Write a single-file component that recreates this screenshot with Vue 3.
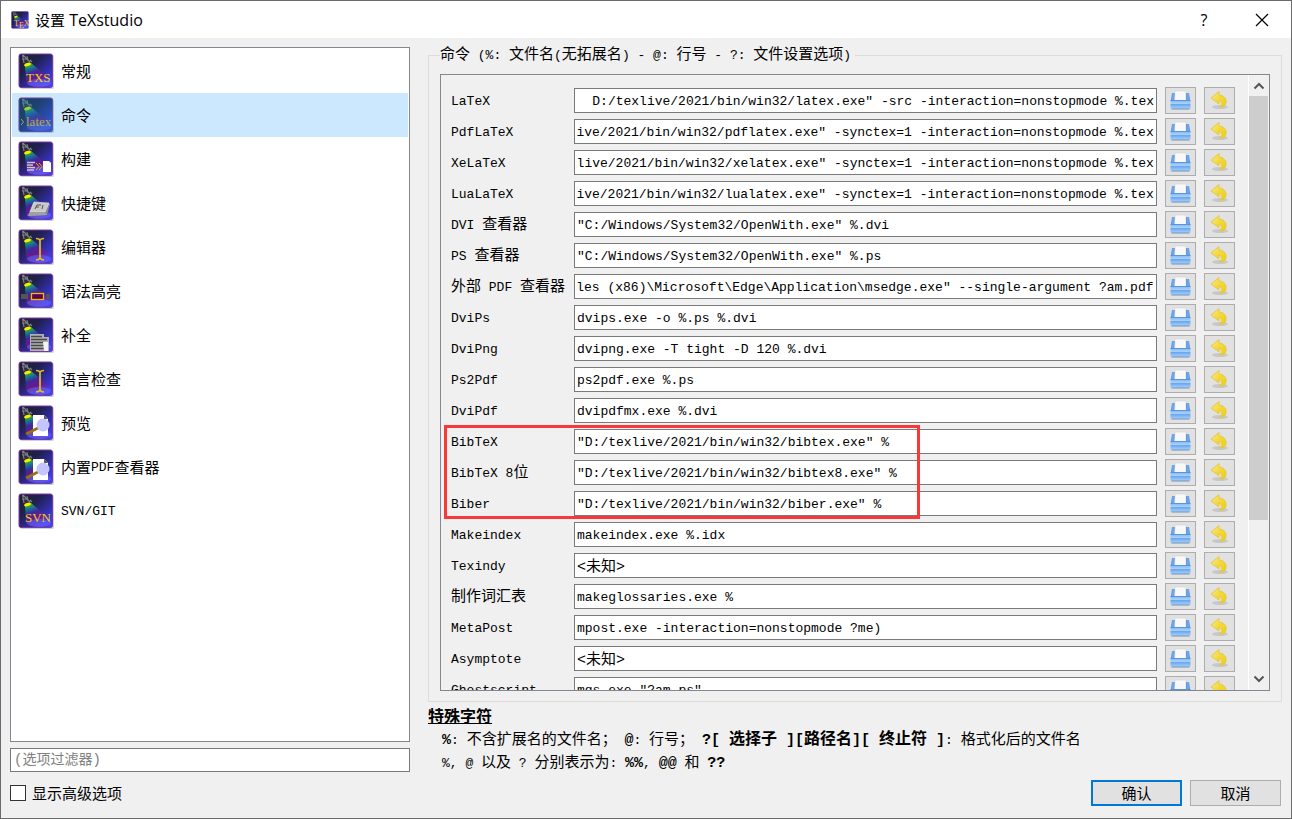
<!-- Settings dialog: category list on the left, command table on the right -->
<template>
  <div class="dialog">
    <!-- Shared icon parts -->
    <svg class="defs" width="0" height="0" aria-hidden="true">
      <defs>
        <linearGradient id="tile" x1="0" y1="0" x2="1" y2="1">
          <stop offset="0" stop-color="#20202c" />
          <stop offset="0.35" stop-color="#20204c" />
          <stop offset="0.7" stop-color="#3430b8" />
          <stop offset="1" stop-color="#4448ff" />
        </linearGradient>
        <linearGradient id="beam" gradientUnits="userSpaceOnUse" x1="9" y1="10" x2="18" y2="34">
          <stop offset="0" stop-color="#e8f000" />
          <stop offset="0.12" stop-color="#38b838" />
          <stop offset="0.26" stop-color="#1878a8" />
          <stop offset="0.42" stop-color="#4828a0" />
          <stop offset="0.66" stop-color="#701888" />
          <stop offset="1" stop-color="#5040e8" />
        </linearGradient>
        <linearGradient id="tray" x1="0" y1="0" x2="0" y2="1">
          <stop offset="0" stop-color="#7fb6f2" />
          <stop offset="0.4" stop-color="#a9d0fa" />
          <stop offset="0.5" stop-color="#6ba8ee" />
          <stop offset="1" stop-color="#a9d4ff" />
        </linearGradient>
        <linearGradient id="gold" x1="0" y1="0" x2="1" y2="1">
          <stop offset="0" stop-color="#fbe98a" />
          <stop offset="0.5" stop-color="#f3d83c" />
          <stop offset="1" stop-color="#efd000" />
        </linearGradient>
        <g id="spot">
          <rect x="2" y="2" width="34" height="34" rx="2" fill="#777" opacity="0.35" />
          <rect x="1" y="1" width="33.5" height="33.5" rx="2" fill="url(#tile)" stroke="#7838a8" />
          <path d="M7 13 L13 10 L32 26 C34 31 30 33.500 22 33.500 C13 33.500 8 31 8 27 Z" fill="url(#beam)" opacity="0.85" />
          <ellipse cx="21" cy="30" rx="12" ry="4" fill="#6870ff" opacity="0.45" />
          <path d="M4 7 L10 5 L13 10 L6 13 Z" fill="#303038" />
          <path d="M4.500 2 L6 10 M5 2 L12 9 M4 6 L9 6 M9 3 L10 8 M12 7 L14 9" stroke="#80808a" stroke-width="1.1" fill="none" />
          <ellipse cx="9.500" cy="11.500" rx="3.500" ry="1.700" fill="#f0f000" transform="rotate(-18 9.500 11.500)" />
        </g>
      </defs>
    </svg>

    <header class="titlebar">
      <svg class="logo" viewBox="0 0 36 36" aria-hidden="true">
        <use href="#spot" />
        <text x="6" y="29" class="glyph logo-text">T<tspan dy="4">E</tspan><tspan dy="-4">X</tspan></text>
      </svg>
      <h1><span class="cjk">设置</span> TeXstudio</h1>
      <button type="button" class="caption-btn help" aria-label="Help">?</button>
      <button type="button" class="caption-btn" aria-label="Close">
        <svg width="14" height="14" viewBox="0 0 14 14"><path d="M1 1 L13 13 M13 1 L1 13" stroke="#000" stroke-width="1.2" /></svg>
      </button>
    </header>

    <div class="content">
      <aside class="sidebar">
        <ul class="categories">
          <li v-for="c in categories" :key="c.name">
            <button type="button" :class="['category', { selected: c.name === current }]" @click="current = c.name">
              <svg class="cat-icon" viewBox="0 0 36 36" aria-hidden="true">
                <use href="#spot" />
                <text v-if="c.icon === 'txs'" x="8" y="29" class="glyph">TXS</text>
                <text v-else-if="c.icon === 'svn'" x="7" y="29" class="glyph">SVN</text>
                <g v-else-if="c.icon === 'latex'">
                  <path d="M3 22 L5.5 25 L3 28" stroke="#d8d020" fill="none" />
                  <text x="8" y="29" class="glyph">latex</text>
                </g>
                <g v-else-if="c.icon === 'build'">
                  <path d="M9 21.500h8M9 24h6M9 26.500h8M9 29h7" stroke="#c8c8d0" stroke-width="1.6" />
                  <path d="M18 22l3 3.500-3 3.500M21 22l3 3.500-3 3.500" stroke="#e0b020" fill="none" />
                  <path d="M25 20h6l2 2v9h-8z" fill="#fff" />
                </g>
                <g v-else-if="c.icon === 'keys'">
                  <path d="M15 18 L32 19 L29 30 L10 31 Z" fill="#888" />
                  <path d="M16 17 L31 18 L27 27 L12 27 Z" fill="#c8c8c8" stroke="#e8e8e8" stroke-width="0.6" />
                  <path d="M10 31 L12 27 L27 27 L29 30 Z" fill="#a0a0a0" />
                  <path d="M17 24l2-4h4M18 22h3M25 20l-1 4" stroke="#505050" fill="none" />
                </g>
                <path v-else-if="c.icon === 'caret'" d="M18 9.500q3 0 4 1.500q1-1.500 4-1.500M22 11v18M18 31q3 0 4-2q1 2 4 2" stroke="#e8c020" stroke-width="1.7" fill="none" />
                <g v-else-if="c.icon === 'syntax'">
                  <rect x="3" y="21" width="7" height="5" fill="#555" />
                  <rect x="28" y="21" width="4" height="5" fill="#555" />
                  <rect x="13.500" y="20.500" width="12" height="6" fill="#600050" stroke="#e8c000" stroke-width="1.3" />
                </g>
                <g v-else-if="c.icon === 'complete'">
                  <path d="M12 17h14v3h5v14H12z" fill="#b0b0b4" />
                  <path d="M13 19.500h11M13 22.500h16M13 25.500h13M13 28.500h16M13 31.500h13" stroke="#484848" stroke-width="1.4" />
                  <path d="M25 25h5v9h-4z" fill="#f2f2f2" />
                </g>
                <g v-else>
                  <path d="M15 10h11l4 4v17H15z" fill="#fff" />
                  <path d="M26 10l4 4h-4z" fill="#555" />
                  <path d="M8 29 L20 23" stroke="#987010" stroke-width="2.6" />
                  <circle cx="25" cy="20" r="6.500" fill="#c4c4ff" />
                </g>
                <rect v-if="c.name === current" x="1" y="1" width="34" height="34" fill="#1880b0" opacity="0.35" />
              </svg>
              <span v-for="(part, i) in split(c.name)" :key="i" :class="{ cjk: i % 2 }">{{ part }}</span>
            </button>
          </li>
        </ul>
        <input v-model="filter" class="filter" type="text" placeholder="(选项过滤器)" aria-label="选项过滤器" />
        <label class="advanced cjk">
          <input v-model="advanced" type="checkbox" />
          <span>显示高级选项</span>
        </label>
      </aside>

      <main class="main">
        <fieldset class="group">
          <legend><span v-for="(part, i) in split(legend)" :key="i" :class="{ cjk: i % 2 }">{{ part }}</span></legend>
          <div class="scroll-area">
            <div class="rows">
              <div v-for="(row, n) in commands" :key="row.label" class="row">
                <label :for="'cmd' + n"><span v-for="(part, i) in split(row.label)" :key="i" :class="{ cjk: i % 2 }">{{ part }}</span></label>
                <input :id="'cmd' + n" ref="inputs" v-model="row.value" type="text" spellcheck="false" :class="{ cjk: row.value === '<未知>', tail: row.tail }" />
                <button type="button" class="tool" aria-label="Browse">
                  <svg width="21" height="21" viewBox="0 0 21 21">
                    <path d="M2 3h17l1 8H1z" fill="#3f83d8" />
                    <path d="M2 3h2v8H2zM17 3h2v8h-2z" fill="#6aa6ec" />
                    <path d="M5 1h11v10H4.500z" fill="#f8f8f8" stroke="#d4d4d4" stroke-width="0.6" />
                    <path d="M0.500 10h20v8q0 1-1 1h-18q-1 0-1-1z" fill="url(#tray)" />
                    <path d="M0.500 10.500h20" stroke="#4d8cd8" stroke-width="0.8" />
                    <path d="M1.500 19h18" stroke="#5b7fa8" stroke-width="0.8" />
                  </svg>
                </button>
                <button type="button" class="tool" aria-label="Reset">
                  <svg width="21" height="21" viewBox="0 0 21 21">
                    <ellipse cx="11" cy="17" rx="8" ry="2" fill="#c8c8c8" />
                    <path d="M2 8 L10 1.500 L10 5 C15 5.500 17.500 8.500 17 12.500 C16.500 16 14 17.500 10.500 17 C14 15 13.500 11 10 10.500 L10 14 Z" fill="url(#gold)" stroke="#dfc43c" stroke-width="0.8" />
                  </svg>
                </button>
              </div>
              <div class="highlight"></div>
            </div>
            <div class="scrollbar">
              <svg width="12" height="8" viewBox="0 0 12 8"><path d="M1.500 6.500L6 2l4.500 4.500" fill="none" stroke="#555" stroke-width="2" /></svg>
              <div class="track"><div class="thumb"></div></div>
              <svg width="12" height="8" viewBox="0 0 12 8"><path d="M1.500 1.500L6 6l4.500-4.500" fill="none" stroke="#555" stroke-width="2" /></svg>
            </div>
          </div>
        </fieldset>

        <section class="hints">
          <h2>特殊字符</h2>
          <p><b>%</b>: <span class="cjk">不含扩展名的文件名；</span> <b>@</b>: <span class="cjk">行号；</span> <b>?[ <span class="cjk">选择子</span> ][<span class="cjk">路径名</span>][ <span class="cjk">终止符</span> ]</b>: <span class="cjk">格式化后的文件名</span></p>
          <p>%, @ <span class="cjk">以及</span> ? <span class="cjk">分别表示为</span>: <b>%%</b>, <b>@@</b> <span class="cjk">和</span> <b>??</b></p>
        </section>

        <footer class="actions">
          <button type="button" class="action primary">确认</button>
          <button type="button" class="action">取消</button>
        </footer>
      </main>
    </div>
  </div>
</template>

<script setup>
import { ref, onMounted } from "vue";

const current = ref("命令");
const filter = ref("");
const advanced = ref(false);
const inputs = ref([]);
const legend = "命令 (%: 文件名(无拓展名) - @: 行号 - ?: 文件设置选项)";

const categories = [
  { name: "常规", icon: "txs" },
  { name: "命令", icon: "latex" },
  { name: "构建", icon: "build" },
  { name: "快捷键", icon: "keys" },
  { name: "编辑器", icon: "caret" },
  { name: "语法高亮", icon: "syntax" },
  { name: "补全", icon: "complete" },
  { name: "语言检查", icon: "caret" },
  { name: "预览", icon: "preview" },
  { name: "内置PDF查看器", icon: "preview" },
  { name: "SVN/GIT", icon: "svn" },
];

const commands = ref([
  { label: "LaTeX", value: 'D:/texlive/2021/bin/win32/latex.exe" -src -interaction=nonstopmode %.tex', tail: true },
  { label: "PdfLaTeX", value: '"D:/texlive/2021/bin/win32/pdflatex.exe" -synctex=1 -interaction=nonstopmode %.tex', tail: true },
  { label: "XeLaTeX", value: '"D:/texlive/2021/bin/win32/xelatex.exe" -synctex=1 -interaction=nonstopmode %.tex', tail: true },
  { label: "LuaLaTeX", value: '"D:/texlive/2021/bin/win32/lualatex.exe" -synctex=1 -interaction=nonstopmode %.tex', tail: true },
  { label: "DVI 查看器", value: '"C:/Windows/System32/OpenWith.exe" %.dvi' },
  { label: "PS 查看器", value: '"C:/Windows/System32/OpenWith.exe" %.ps' },
  { label: "外部 PDF 查看器", value: '"C:\\Program Files (x86)\\Microsoft\\Edge\\Application\\msedge.exe" --single-argument ?am.pdf', tail: true },
  { label: "DviPs", value: "dvips.exe -o %.ps %.dvi" },
  { label: "DviPng", value: "dvipng.exe -T tight -D 120 %.dvi" },
  { label: "Ps2Pdf", value: "ps2pdf.exe %.ps" },
  { label: "DviPdf", value: "dvipdfmx.exe %.dvi" },
  { label: "BibTeX", value: '"D:/texlive/2021/bin/win32/bibtex.exe" %' },
  { label: "BibTeX 8位", value: '"D:/texlive/2021/bin/win32/bibtex8.exe" %' },
  { label: "Biber", value: '"D:/texlive/2021/bin/win32/biber.exe" %' },
  { label: "Makeindex", value: "makeindex.exe %.idx" },
  { label: "Texindy", value: "<未知>" },
  { label: "制作词汇表", value: "makeglossaries.exe %" },
  { label: "MetaPost", value: "mpost.exe -interaction=nonstopmode ?me)" },
  { label: "Asymptote", value: "<未知>" },
  { label: "Ghostscript", value: 'mgs.exe "?am.ps"' },
]);

// Odd parts are Chinese, even parts are everything else
const split = (text) => text.split(/([\u4e00-\u9fff]+)/);

// Long commands show their end
onMounted(() => {
  inputs.value.forEach((el) => {
    el.scrollLeft = el.scrollWidth;
  });
});
</script>

<style>
body {
  margin: 0;
}
</style>

<style scoped>
* {
  box-sizing: border-box;
}
.dialog {
  display: flex;
  flex-direction: column;
  height: 100vh;
  border: 1px solid #6b6b6b;
  background: #f0f0f0;
  color: #000;
  font: 13px "Liberation Mono", "Noto Sans CJK SC", monospace;
}
.defs {
  position: absolute;
}
button,
input {
  margin: 0;
  font: inherit;
  color: inherit;
  border-radius: 0;
}
.cjk {
  font-size: 15px;
}
.titlebar {
  display: flex;
  align-items: center;
  flex: none;
  height: 37px;
  padding-left: 10px;
  background: #fff;
}
.logo {
  width: 18px;
  height: 18px;
}
.titlebar h1 {
  flex: 1;
  margin: 0 0 0 6px;
  font: 16px/22px "Open Sans", "Noto Sans CJK SC", sans-serif;
}
.caption-btn {
  display: flex;
  align-items: center;
  justify-content: center;
  width: 58px;
  height: 37px;
  padding: 0;
  border: 0;
  background: none;
}
.help {
  font: 16px "Open Sans", sans-serif;
}
.glyph {
  fill: #f0cc18;
  font-family: "Liberation Serif", serif;
  font-size: 13px;
}
.logo-text {
  font-size: 16px;
}
.content {
  display: flex;
  flex: 1;
  gap: 18px;
  min-height: 0;
  padding: 9px 9px 12px;
}
.sidebar {
  display: flex;
  flex-direction: column;
  flex: 0 0 400px;
}
.categories {
  flex: 1;
  margin: 0;
  padding: 1px;
  list-style: none;
  background: #fff;
  border: 1px solid #828790;
}
.category {
  display: flex;
  align-items: center;
  width: 100%;
  height: 44px;
  padding: 0 6px;
  border: 0;
  background: none;
  text-align: left;
}
.category.selected {
  background: #cce8ff;
}
.cat-icon {
  width: 36px;
  height: 36px;
  margin-right: 7px;
}
.filter {
  height: 24px;
  margin-top: 6px;
  padding: 0 3px;
  border: 1px solid #7a7a7a;
  background: #fff;
  font-size: 14px;
}
.filter::placeholder {
  color: #808080;
  opacity: 1;
}
.advanced {
  display: flex;
  align-items: center;
  gap: 6px;
  height: 20px;
  margin-top: 11px;
  margin-bottom: 3px;
}
.advanced input {
  appearance: none;
  width: 16px;
  height: 16px;
  border: 1px solid #333;
  background: #fff;
}
.main {
  display: flex;
  flex-direction: column;
  flex: 1;
  min-width: 0;
}
.group {
  display: flex;
  flex-direction: column;
  flex: 1;
  min-width: 0;
  min-height: 0;
  margin: 0;
  padding: 10px 11px;
  border: 1px solid #dcdcdc;
}
.group legend {
  height: 17px;
  padding: 0 4px 0 0;
  line-height: 17px;
  white-space: pre;
}
.scroll-area {
  display: flex;
  flex: 1;
  min-height: 0;
  overflow: hidden;
  border: 1px solid #828790;
}
.rows {
  position: relative;
  display: flex;
  flex-direction: column;
  flex: 1;
  gap: 4px;
  min-width: 0;
  padding: 12px 13px 0 10px;
}
.row {
  display: grid;
  grid-template-columns: 115px 1fr 31px 31px;
  grid-template-rows: 27px;
  column-gap: 8px;
  align-items: center;
  flex: none;
}
.row label {
  padding-top: 2px;
  line-height: 25px;
  white-space: pre;
}
.row input {
  width: 100%;
  min-width: 0;
  height: 25px;
  padding: 1px 2px 0;
  border: 1px solid #7a7a7a;
  background: #fff;
}
.row input.cjk {
  padding: 0 2px 2px;
}
.row .tail {
  text-align: right;
}
.tool {
  display: flex;
  align-items: center;
  justify-content: center;
  height: 27px;
  padding: 0;
  border: 1px solid #adadad;
  background: #e1e1e1;
}
/* Red frame over the bibliography commands */
.highlight {
  position: absolute;
  top: 350px;
  left: 3px;
  width: 476px;
  height: 94px;
  border: 3px solid #fa3838;
  pointer-events: none;
}
.scrollbar {
  display: flex;
  flex-direction: column;
  align-items: center;
  flex: 0 0 21px;
  padding: 7px 0;
  border-left: 1px solid #fff;
}
.track {
  flex: 1;
  width: 100%;
  margin: 6px 0;
}
.thumb {
  width: 19px;
  height: 74%;
  background: #cdcdcd;
}
.hints h2 {
  margin: 5px 0 0;
  font-size: 16px;
  line-height: 22px;
  text-decoration: underline;
}
.hints p {
  margin: 0 0 0 14px;
  line-height: 23px;
  white-space: pre;
}
.hints b {
  font-size: 15px;
}
.hints b .cjk {
  font-size: 16px;
}
.actions {
  display: flex;
  justify-content: flex-end;
  gap: 8px;
  margin-top: 5px;
  padding-right: 1px;
}
.action {
  width: 91px;
  height: 26px;
  padding: 0;
  border: 1px solid #adadad;
  background: #e1e1e1;
  font-size: 15px;
}
.action.primary {
  border: 2px solid #0078d7;
}
</style>
